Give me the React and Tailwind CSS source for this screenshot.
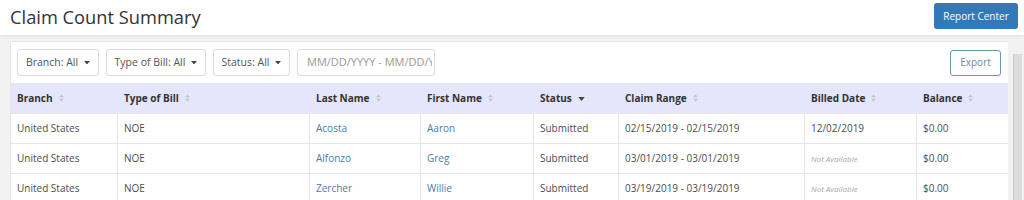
const columns = [
  { label: 'Branch', w: 'w-[107px]', sort: 'both' },
  { label: 'Type of Bill', w: 'w-[192px]', sort: 'both' },
  { label: 'Last Name', w: 'w-[111px]', sort: 'both' },
  { label: 'First Name', w: 'w-[113px]', sort: 'both' },
  { label: 'Status', w: 'w-[85px]', sort: 'down' },
  { label: 'Claim Range', w: 'w-[186px]', sort: 'both' },
  { label: 'Billed Date', w: 'w-[112px]', sort: 'both' },
  { label: 'Balance', w: 'w-[91px]', sort: 'both' },
];

const rows = [
  { last: 'Acosta', first: 'Aaron', range: '02/15/2019 - 02/15/2019', billed: '12/02/2019' },
  { last: 'Alfonzo', first: 'Greg', range: '03/01/2019 - 03/01/2019', billed: null },
  { last: 'Zercher', first: 'Willie', range: '03/19/2019 - 03/19/2019', billed: null },
];

function SortIcon({ type }) {
  if (type === 'down') {
    return (
      <svg width="7" height="4" viewBox="0 0 8 5" className="ml-1.5 mt-[2px]">
        <path d="M0 0h8L4 5z" fill="#444" />
      </svg>
    );
  }
  return (
    <svg width="5" height="8" viewBox="0 0 6 9" className="ml-1.5">
      <path d="M0 3.5L3 0l3 3.5z M0 5.5h6L3 9z" fill="#c4c4d2" />
    </svg>
  );
}

function Caret() {
  return (
    <svg width="6" height="3.5" viewBox="0 0 7 4" className="ml-1.5">
      <path d="M0 0h7L3.5 4z" fill="#444" />
    </svg>
  );
}

function FilterButton({ label, w }) {
  return (
    <button className={`${w} h-[27px] flex items-center justify-center border border-[#dcdcdc] rounded-[3px] bg-white text-[10.5px] text-[#555]`}>
      {label}
      <Caret />
    </button>
  );
}

export default function App() {
  return (
    <div className="w-[1024px] h-[200px] overflow-hidden bg-[#f2f2f2] text-[10px] text-[#4d4d4d]" style={{ fontFamily: '"Open Sans", "Liberation Sans", sans-serif' }}>
      <div className="h-[35px] bg-white flex items-center justify-between pl-[10px] pr-[6px] shadow-[0_1px_4px_rgba(0,0,0,0.08)] relative">
        <h1 className="text-[18.3px] text-[#333] leading-none -mt-[1px]">Claim Count Summary</h1>
        <button className="w-[84px] h-[26px] -mt-[3px] rounded-[3px] bg-[#3479b7] text-white text-[10px]">Report Center</button>
      </div>
      <div className="flex">
        <div className="ml-[10px] mt-[6px] w-[998px] bg-white border-l border-t border-[#e6e6e6]">
          <div className="h-[41px] flex items-center pl-[6px] pr-[7px] gap-[7px]">
            <FilterButton label="Branch: All" w="w-[82px]" />
            <FilterButton label="Type of Bill: All" w="w-[100px]" />
            <FilterButton label="Status: All" w="w-[77px]" />
            <div className="w-[138px] h-[27px] flex items-center border border-[#dcdcdc] rounded-[3px] pl-[9px] pr-[2px]">
              <div className="overflow-hidden whitespace-nowrap text-[11px] text-[#999]">MM/DD/YYYY - MM/DD/YYYY</div>
            </div>
            <div className="flex-1" />
            <button className="w-[51px] h-[26px] border border-[#6a98ab] rounded-[3px] text-[10px] text-[#6d8b98]">Export</button>
          </div>
          <div className="w-[997px]">
            <div className="flex h-[30px] bg-[#e5e5fb]">
              {columns.map((c) => (
                <div key={c.label} className={`${c.w} flex items-center pl-[6px] font-bold text-[#333]`}>
                  {c.label}
                  <SortIcon type={c.sort} />
                </div>
              ))}
            </div>
            {rows.map((r) => (
              <div key={r.last} className="flex h-[30px] border-t border-[#e6e6e6]">
                <div className="w-[107px] flex items-center pl-[6px] border-r border-[#e6e6e6]">United States</div>
                <div className="w-[192px] flex items-center pl-[6px] border-r border-[#e6e6e6]">NOE</div>
                <div className="w-[111px] flex items-center pl-[6px] border-r border-[#e6e6e6] text-[#4c7cad]">{r.last}</div>
                <div className="w-[113px] flex items-center pl-[6px] border-r border-[#e6e6e6] text-[#4c7cad]">{r.first}</div>
                <div className="w-[85px] flex items-center pl-[6px] border-r border-[#e6e6e6]">Submitted</div>
                <div className="w-[186px] flex items-center pl-[6px] border-r border-[#e6e6e6]">{r.range}</div>
                <div className="w-[112px] flex items-center pl-[6px] border-r border-[#e6e6e6]">
                  {r.billed ? r.billed : <span className="italic text-[8px] text-[#aaa]">Not Available</span>}
                </div>
                <div className="w-[91px] flex items-center pl-[6px] text-[#4d4d4d]">$0.00</div>
              </div>
            ))}
          </div>
        </div>
        <div className="ml-[5px] mt-[19px] w-[9px] h-[200px] bg-[#dcdcdc] border-l border-[#c8c8c8]" />
      </div>
    </div>
  );
}
